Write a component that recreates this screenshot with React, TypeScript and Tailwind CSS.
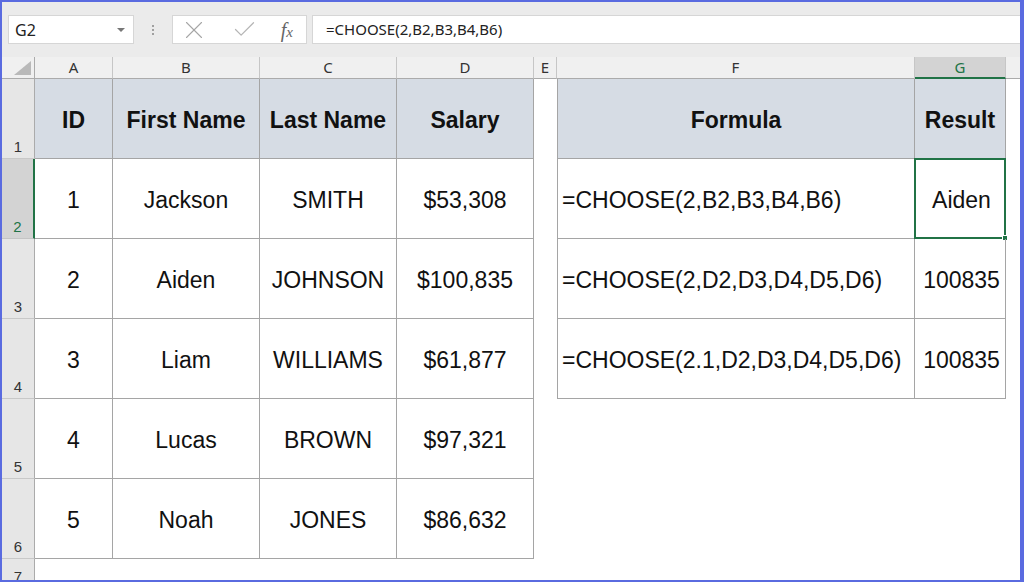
import React from "react";
import { X, Check } from "lucide-react";

const data = [
  ["1", "Jackson", "SMITH", "$53,308"],
  ["2", "Aiden", "JOHNSON", "$100,835"],
  ["3", "Liam", "WILLIAMS", "$61,877"],
  ["4", "Lucas", "BROWN", "$97,321"],
  ["5", "Noah", "JONES", "$86,632"],
];

const formulas = [
  ["=CHOOSE(2,B2,B3,B4,B6)", "Aiden"],
  ["=CHOOSE(2,D2,D3,D4,D5,D6)", "100835"],
  ["=CHOOSE(2.1,D2,D3,D4,D5,D6)", "100835"],
];

const cols = ["A", "B", "C", "D", "E", "F", "G"];

function RowHead({ n, selected }: { n: number; selected?: boolean }) {
  return (
    <div
      className={
        selected
          ? "flex items-end justify-center pb-[4px] leading-none bg-[#d3d3d3] border-b border-[#c4c4c4] border-r-2 border-r-[#217346] text-[#217346] text-[15px]"
          : "flex items-end justify-center pb-[4px] leading-none bg-[#e6e6e6] border-b border-[#c8c8c8] border-r border-r-[#ababab] text-[#333] text-[15px]"
      }
    >
      {n}
    </div>
  );
}

export default function App() {
  const cell = "flex items-center justify-center pt-[3px] border-r border-b border-[#a5a5a5] text-[23px] text-[#111]";
  return (
    <div className="w-[1024px] h-[582px] overflow-hidden bg-white border-t-2 border-l-2 border-b-2 border-r-4 border-[#5a6be0] flex flex-col font-['Liberation_Sans',Arial,sans-serif]">
      {/* toolbar */}
      <div className="h-[55px] shrink-0 bg-[#ebebeb] flex items-start pt-[13px] pl-[6px] font-['Noto_Sans',sans-serif]">
        <div className="w-[126px] h-[29px] bg-white border border-[#d6d6d6] flex items-center justify-between pl-[6px] pr-[8px]">
          <span className="text-[16px] text-[#222]">G2</span>
          <span className="w-0 h-0 border-l-[4px] border-r-[4px] border-t-[4px] border-l-transparent border-r-transparent border-t-[#777]" />
        </div>
        <div className="w-[38px] h-[29px] flex flex-col items-center justify-center gap-[2px]">
          <span className="w-[2px] h-[2px] bg-[#a0a0a0]" />
          <span className="w-[2px] h-[2px] bg-[#a0a0a0]" />
          <span className="w-[2px] h-[2px] bg-[#a0a0a0]" />
        </div>
        <div className="w-[135px] h-[29px] bg-white border border-[#d6d6d6] flex items-center justify-between pl-[6px] pr-[13px]">
          <X size={30} strokeWidth={0.9} color="#a6a6a6" />
          <Check size={27} strokeWidth={1.1} color="#b5b5b5" />
          <span className="italic font-['Liberation_Serif',serif] text-[20px] text-[#666] leading-none">
            f<span className="text-[15px]">x</span>
          </span>
        </div>
        <div className="flex-1 ml-[5px] h-[29px] bg-white border border-[#d6d6d6] border-r-0 flex items-center pl-[13px]">
          <span className="text-[15px] text-[#222]">=CHOOSE(2,B2,B3,B4,B6)</span>
        </div>
      </div>

      {/* sheet */}
      <div className="flex-1 grid grid-cols-[33px_78px_147px_137px_137px_23px_358px_91px_1fr] grid-rows-[22px_80px_80px_80px_80px_80px_80px_1fr]">
        {/* column headers */}
        <div className="bg-[#f0f0f0] border-r border-b border-[#ababab] flex items-end justify-end pr-[3px] pb-[3px]">
          <svg width="17" height="14" viewBox="0 0 17 14">
            <polygon points="17,0 17,14 0,14" fill="#b9b9b9" />
          </svg>
        </div>
        {cols.map((c) =>
          c === "G" ? (
            <div
              key={c}
              className="bg-[#d3d3d3] border-r border-[#c6c6c6] border-b-2 border-b-[#217346] flex items-center justify-center text-[15px] text-[#217346] font-['Noto_Sans',sans-serif]"
            >
              {c}
            </div>
          ) : (
            <div
              key={c}
              className="bg-[#f0f0f0] border-r border-[#c6c6c6] border-b border-b-[#ababab] flex items-center justify-center text-[15px] text-[#333] font-['Noto_Sans',sans-serif]"
            >
              {c}
            </div>
          )
        )}
        <div className="bg-[#f0f0f0] border-b border-[#ababab]" />

        {/* row 1 */}
        <RowHead n={1} />
        {["ID", "First Name", "Last Name", "Salary"].map((h) => (
          <div key={h} className={cell + " bg-[#d6dce4] font-bold"}>
            {h}
          </div>
        ))}
        <div />
        <div className={cell + " bg-[#d6dce4] font-bold border-l"}>Formula</div>
        <div className={cell + " bg-[#d6dce4] font-bold"}>Result</div>
        <div />

        {/* rows 2-6 */}
        {data.map((row, i) => (
          <React.Fragment key={i}>
            <RowHead n={i + 2} selected={i === 0} />
            {row.map((v, j) => (
              <div key={j} className={cell}>
                {v}
              </div>
            ))}
            <div />
            {i < 3 ? (
              <>
                <div className={cell + " border-l justify-start pl-[4px]"}>{formulas[i][0]}</div>
                <div className={cell + " relative pl-[3px]"}>
                  {formulas[i][1]}
                  {i === 0 && (
                    <div className="absolute -left-px -top-px right-[-1px] bottom-[-1px] border-2 border-[#217346]">
                      <div className="absolute right-[-4px] bottom-[-4px] w-[6px] h-[6px] bg-[#217346] border border-white" />
                    </div>
                  )}
                </div>
              </>
            ) : (
              <>
                <div />
                <div />
              </>
            )}
            <div />
          </React.Fragment>
        ))}

        {/* row 7 */}
        <div className="bg-[#e6e6e6] border-r border-[#ababab] flex justify-center pt-[10px] text-[15px] leading-none text-[#333] overflow-hidden">
          7
        </div>
        <div className="col-span-8" />
      </div>
    </div>
  );
}
